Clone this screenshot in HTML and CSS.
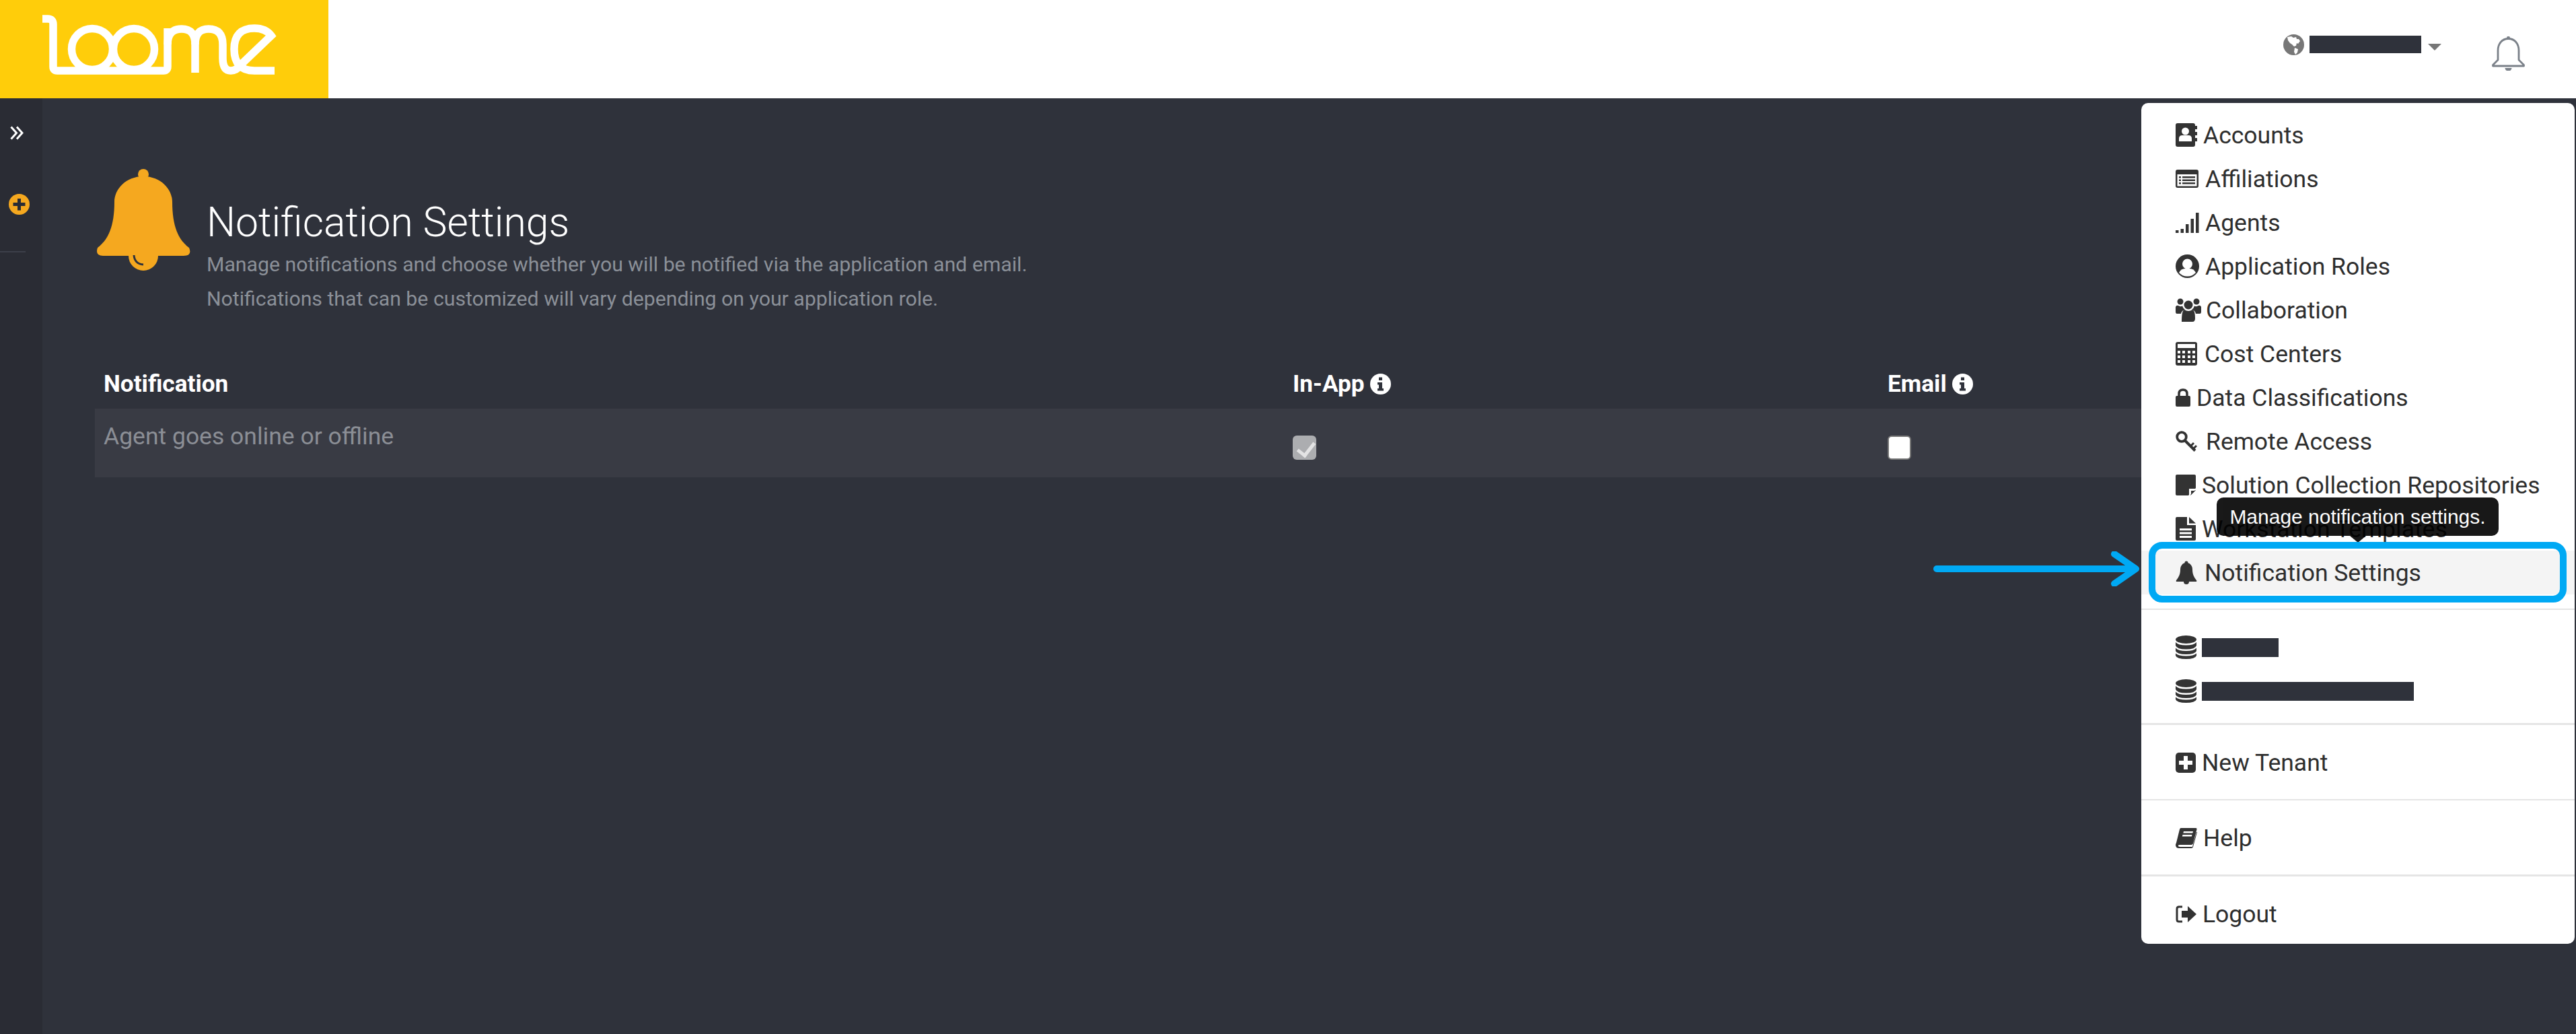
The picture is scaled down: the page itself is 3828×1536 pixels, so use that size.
FILE: index.html
```html
<!DOCTYPE html>
<html lang="en">
<head>
<meta charset="utf-8">
<title>Notification Settings</title>
<link rel="stylesheet" href="styles.css">
</head>
<body>
<header class="topbar">
  <a class="logo" aria-label="Loome">
    <svg width="488" height="146" viewBox="0 0 488 146" fill="none" stroke="#fff" stroke-width="11.5">
      <path d="M63 28H71Q79 28 79 36V99Q79 105 85 105H243Q249 105 249 99V42"/>
      <circle cx="137" cy="73" r="30.5"/>
      <circle cx="199" cy="73" r="30.5"/>
      <path d="M249 66Q249 43 270 43Q290 43 290 66V108"/>
      <path d="M290 66Q290 43 310 43Q331 43 331 66V86Q331 105 343 105Q352 105 359 95L403 53Q395 42 378 42Q348 42 348 73Q348 105 378 105H408"/>
    </svg>
  </a>
  <div class="top-right">
    <svg class="globe" width="31" height="31" viewBox="0 0 31 31">
      <circle cx="15.5" cy="15.5" r="15.5" fill="#777"/>
      <path d="M6 4L12 3L15 5L19 4L20 7L23 7L25 10L22 14L20 13L19 17L16 18L13 15L10 13L7 9Z" fill="#fff"/>
      <path d="M17 20L22 22L21 27L18 30L16 26Z" fill="#fff"/>
    </svg>
    <span class="redact user-bar"></span>
    <span class="caret"></span>
    <svg class="top-bell" width="49" height="52" viewBox="0 0 49 52" fill="none" stroke="#7b8189" stroke-width="2.8">
      <path d="M24.5 4.500C15 4.500 9 12 9 22V36L1.500 43.500V45H47.500V43.500L40 36V22C40 12 34 4.500 24.500 4.500Z" stroke-linejoin="round"/>
      <rect x="22" y="1" width="5" height="4" rx="2" fill="#7b8189" stroke="none"/>
      <path d="M19.500 48H29.500A5 4.500 0 0 1 19.500 48Z" fill="#7b8189" stroke="none"/>
    </svg>
  </div>
</header>

<div class="shell">
  <aside class="sidebar">
    <svg class="side-chevrons" width="20" height="21" viewBox="0 0 20 21" fill="none" stroke="#fff" stroke-width="3">
      <path d="M1.500 1.500L9.500 10.500L1.500 19.500"/>
      <path d="M10 1.500L18 10.500L10 19.500"/>
    </svg>
    <svg class="side-plus" width="31" height="31" viewBox="0 0 31 31">
      <circle cx="15.500" cy="15.500" r="15.500" fill="#f5a81f"/>
      <path d="M13 7H18V13H24.500V18H18V24.500H13V18H6.500V13H13Z" fill="#2a2c34"/>
    </svg>
    <div class="side-rule"></div>
  </aside>

  <main class="content">
    <section class="page-head">
      <svg class="page-bell" width="141" height="151" viewBox="0 0 141 151">
        <circle cx="70" cy="8" r="8" fill="#f5a81f"/>
        <path d="M70 11C44 11 27 30 27 49C27 85 18 105 2 117Q-2 129 10 129H130Q143 129 138 117C122 105 113 85 113 49C113 30 96 11 70 11Z" fill="#f5a81f"/>
        <path d="M48 129A22 22 0 0 0 92 129Z" fill="#f5a81f"/>
        <path d="M56 128Q57 141 70 142" fill="none" stroke="#2f323b" stroke-width="3"/>
      </svg>
      <div class="page-titles">
        <h1>Notification Settings</h1>
        <p>Manage notifications and choose whether you will be notified via the application and email.</p>
        <p>Notifications that can be customized will vary depending on your application role.</p>
      </div>
    </section>

    <section class="settings">
      <div class="settings-head">
        <div>Notification</div>
        <div class="with-info">In-App
          <svg width="31" height="31" viewBox="0 0 31 31"><circle cx="15.500" cy="15.500" r="15.500" fill="#fff"/><path d="M13 5.500H18V10H13ZM11 13H18V22H20V25.500H11V22H13V16.500H11Z" fill="#2f323b"/></svg>
        </div>
        <div class="with-info">Email
          <svg width="31" height="31" viewBox="0 0 31 31"><circle cx="15.500" cy="15.500" r="15.500" fill="#fff"/><path d="M13 5.500H18V10H13ZM11 13H18V22H20V25.500H11V22H13V16.500H11Z" fill="#2f323b"/></svg>
        </div>
      </div>
      <div class="settings-row">
        <div class="row-label">Agent goes online or offline</div>
        <div class="row-check"><input class="check" type="checkbox" checked disabled></div>
        <div class="row-check"><input class="check" type="checkbox"></div>
      </div>
    </section>
  </main>
</div>

<nav class="menu">
  <a class="item"><svg width="32" height="35" viewBox="0 0 32 35"><rect width="29" height="35" rx="3" fill="#333"/><path d="M29 4h3v5h-3zM29 13h3v5h-3zM29 22h3v5h-3z" fill="#333"/><circle cx="14.500" cy="12" r="5.500" fill="#fff"/><path d="M5 27V23Q5 18 10 18H19Q24 18 24 23V27Z" fill="#fff"/></svg>Accounts</a>
  <a class="item"><svg width="35" height="27" viewBox="0 0 35 27"><rect width="34" height="27" rx="3" fill="#333"/><rect x="2.500" y="7" width="29" height="17.500" fill="#fff"/><path d="M5 10h3v2.500H5zM5 14.500h3V17H5zM5 19h3v2.500H5zM10 10h19v2.500H10zM10 14.500h19V17H10zM10 19h19v2.500H10z" fill="#333"/></svg>Affiliations</a>
  <a class="item"><svg width="35" height="30" viewBox="0 0 35 30" fill="#333"><rect x="0" y="26" width="4.500" height="4"/><rect x="7.500" y="24" width="4.500" height="6"/><rect x="15" y="17" width="4.500" height="13"/><rect x="22.500" y="9" width="4.500" height="21"/><rect x="30" y="0" width="4.500" height="30"/></svg>Agents</a>
  <a class="item"><svg width="35" height="35" viewBox="0 0 35 35"><circle cx="17.500" cy="17.500" r="17.500" fill="#333"/><circle cx="17.500" cy="14" r="7.500" fill="#fff"/><path d="M5 27Q8 21 14 21H21Q27 21 30 27Q25 32.500 17.500 32.500Q10 32.500 5 27Z" fill="#fff"/></svg>Application Roles</a>
  <a class="item"><svg class="ic-team" width="38" height="35" viewBox="0 0 38 35" fill="#333"><circle cx="7" cy="5" r="4.500"/><circle cx="31" cy="5" r="4.500"/><circle cx="19" cy="10" r="6.500"/><path d="M0 13Q1 10 4 11Q7 13 10 11.500Q11 15 14 17Q9 18 8 23H2Q0 23 0 20ZM38 13Q37 10 34 11Q31 13 28 11.500Q27 15 24 17Q29 18 30 23H36Q38 23 38 20Z"/><path d="M9 35Q9 18 13 17Q19 21 25 17Q29 18 29 30Q29 35 25 35H12Z"/></svg>Collaboration</a>
  <a class="item"><svg class="ic-calc" width="32" height="35" viewBox="0 0 32 35"><rect width="32" height="35" rx="3" fill="#333"/><rect x="3" y="3" width="26" height="6" fill="#fff"/><path d="M3 13h4v4H3zM10 13h4v4h-4zM18 13h4v4h-4zM25 13h4v4h-4zM3 20h4v4H3zM10 20h4v4h-4zM18 20h4v4h-4zM25 20h4v4h-4zM3 27h4v4H3zM10 27h4v4h-4zM18 27h4v4h-4zM25 27h4v4h-4z" fill="#fff"/></svg>Cost Centers</a>
  <a class="item"><svg width="22" height="27" viewBox="0 0 22 27" fill="none"><rect y="11" width="22" height="16" rx="2" fill="#333"/><path d="M5 12V8Q5 2 11 2Q17 2 17 8V12" stroke="#333" stroke-width="3.500"/></svg>Data Classifications</a>
  <a class="item"><svg class="ic-key" width="32" height="31" viewBox="0 0 32 31" fill="none" stroke="#333"><circle cx="9" cy="9" r="6.800" stroke-width="3.800"/><path d="M13.500 14L29 29.500" stroke-width="4"/><path d="M23 22L27 18M27 26L31 22" stroke-width="3"/></svg>Remote Access</a>
  <a class="item"><svg width="30" height="31" viewBox="0 0 30 31"><path d="M2 0H28Q30 0 30 2V20L19 31H2Q0 31 0 29V2Q0 0 2 0Z" fill="#333"/><path d="M22 23H30L22 31Z" fill="#333"/><path d="M20 21H30V22L21 31H20Z" fill="#fff"/><path d="M23 24H29L23 30Z" fill="#333"/></svg>Solution Collection Repositories</a>
  <a class="item"><svg width="30" height="35" viewBox="0 0 30 35"><path d="M2 0H17V12H30V33Q30 35 28 35H2Q0 35 0 33V2Q0 0 2 0Z" fill="#333"/><path d="M20 0L30 9.500H20Z" fill="#333"/><path d="M6 17H24V20H6ZM6 22.500H24V25.500H6ZM6 28H24V31H6Z" fill="#fff"/></svg>Workstation Templates</a>
  <a class="item item-active"><svg class="ic-bell" width="32" height="35" viewBox="0 0 32 35"><circle cx="16" cy="3" r="2.500" fill="#333"/><path d="M16 3C10 3 7 8 7 13C7 21 4 25 1 29Q0 31 2 31H30Q32 31 31 29C28 25 25 21 25 13C25 8 22 3 16 3Z" fill="#333"/><path d="M12 31A4 4 0 0 0 20 31Z" fill="#333"/></svg>Notification Settings</a>
  <hr class="rule">
  <a class="item"><svg class="ic-db" width="31" height="35" viewBox="0 0 31 35" fill="#333"><ellipse cx="15.500" cy="6" rx="15.500" ry="6"/><path d="M0 10Q4 14.500 15.500 14.500Q27 14.500 31 10V15Q29 20.500 15.500 20.500Q2 20.500 0 15ZM0 18.500Q4 23 15.500 23Q27 23 31 18.500V23Q29 28 15.500 28Q2 28 0 23ZM0 26.500Q4 30.500 15.500 30.500Q27 30.500 31 26.500V30Q29 35 15.500 35Q2 35 0 30Z"/></svg><span class="redact name-short"></span></a>
  <a class="item"><svg class="ic-db" width="31" height="35" viewBox="0 0 31 35" fill="#333"><ellipse cx="15.500" cy="6" rx="15.500" ry="6"/><path d="M0 10Q4 14.500 15.500 14.500Q27 14.500 31 10V15Q29 20.500 15.500 20.500Q2 20.500 0 15ZM0 18.500Q4 23 15.500 23Q27 23 31 18.500V23Q29 28 15.500 28Q2 28 0 23ZM0 26.500Q4 30.500 15.500 30.500Q27 30.500 31 26.500V30Q29 35 15.500 35Q2 35 0 30Z"/></svg><span class="redact name-long"></span></a>
  <hr class="rule rule-thick rule-tight">
  <a class="item"><svg width="30" height="30" viewBox="0 0 30 30"><rect width="30" height="30" rx="5" fill="#333"/><path d="M12 5H18V12H25V18H18V25H12V18H5V12H12Z" fill="#fff"/></svg>New Tenant</a>
  <hr class="rule">
  <a class="item"><svg width="32" height="30" viewBox="0 0 32 30" fill="#333"><path d="M8 0H30Q32 0 31.500 2L26 23Q25.500 25 23 25H6Q3.500 25 4 27Q4.500 28 7 28H25L31 6H32L26 28Q25.500 30 23 30H5Q0 30 0 25Q0 24 1 22L6 2Q6.500 0 8 0Z"/><path d="M12 5H26L25.300 7.500H11.300ZM10.500 10H24.500L23.800 12.500H9.800Z" fill="#fff"/></svg>Help</a>
  <hr class="rule rule-thick">
  <a class="item"><svg width="31" height="26" viewBox="0 0 31 26" fill="#333"><path d="M10 2H5Q2 2 2 5V21Q2 24 5 24H10" fill="none" stroke="#333" stroke-width="3"/><path d="M9 8H18V1L31 13L18 25V18H9Z"/></svg>Logout</a>

  <div class="tooltip">Manage notification settings.</div>
</nav>

<div class="callout-box"></div>
<svg class="callout-arrow" width="315" height="52" viewBox="0 0 315 52" fill="none" stroke="#00a9f4" stroke-width="10" stroke-linecap="round" stroke-linejoin="round">
  <path d="M10 26H304"/>
  <path d="M274 4L306 26L274 48"/>
</svg>
</body>
</html>
```

FILE: styles.css
```css
* { box-sizing: border-box; }

html, body {
  margin: 0;
  height: 100%;
}

body {
  position: relative;
  display: flex;
  flex-direction: column;
  height: 1536px;
  overflow: hidden;
  background: #2f323b;
  font-family: Roboto, "Liberation Sans", sans-serif;
  color: #fff;
}

/* top bar */
.topbar {
  display: flex;
  justify-content: space-between;
  align-items: stretch;
  height: 146px;
  background: #fff;
  flex: none;
}

.logo {
  display: block;
  width: 488px;
  height: 146px;
  background: #ffcd0a;
}

.logo svg { display: block; }

.top-right {
  display: flex;
  align-items: flex-start;
  padding: 51px 76px 0 0;
}

.globe { flex: none; }

.redact {
  display: block;
  background: #2f323b;
}

.user-bar {
  width: 166px;
  height: 26px;
  margin: 2px 0 0 8px;
}

.caret {
  width: 0;
  height: 0;
  margin: 14px 0 0 10px;
  border-left: 10px solid transparent;
  border-right: 10px solid transparent;
  border-top: 10px solid #777;
}

.top-bell { margin: 2px 0 0 75px; }

/* shell */
.shell {
  display: flex;
  flex: 1;
  min-height: 0;
}

.sidebar {
  width: 63px;
  flex: none;
  background: #2a2c34;
  display: flex;
  flex-direction: column;
  align-items: flex-start;
}

.side-chevrons { margin: 41px 0 0 15px; }
.side-plus { margin: 80px 0 0 13px; }

.side-rule {
  width: 38px;
  height: 2px;
  margin-top: 54px;
  background: #3c3f49;
}

.content {
  flex: 1;
  padding: 105px 78px 0;
}

.page-head {
  display: flex;
  align-items: flex-start;
}

.page-bell {
  flex: none;
  margin-left: 2px;
}

.page-titles { margin: 44px 0 0 23px; }

.page-titles h1 {
  margin: 0;
  font-size: 60.600px;
  font-weight: 300;
  line-height: 72px;
  color: #fff;
}

.page-titles p {
  margin: 0;
  font-size: 30.250px;
  line-height: 51px;
  color: #8b9098;
}

.settings { margin-top: 76px; }

.settings-head,
.settings-row {
  display: grid;
  grid-template-columns: 1754px 884px 1fr;
  padding-left: 13px;
}

.settings-head > div + div,
.settings-row > div + div { padding-left: 13px; }

.settings-head {
  align-items: center;
  height: 50px;
  font-size: 35.200px;
  font-weight: 700;
  line-height: 50px;
  margin-bottom: 12px;
}

.with-info {
  display: flex;
  align-items: center;
  gap: 8px;
}

.settings-row {
  height: 102px;
  background: #393b44;
}

.row-label {
  padding-top: 18px;
  font-size: 35.500px;
  line-height: 46px;
  color: #8b8e95;
}

.row-check {
  display: flex;
  align-items: center;
}

.check {
  appearance: none;
  position: relative;
  width: 35px;
  height: 36px;
  margin: 14px 0 0;
  border: 2px solid #767676;
  border-radius: 6px;
  background: #fff;
}

.check:checked {
  border: 0;
  background: #acadb0;
}

.check:checked::after {
  content: "";
  position: absolute;
  left: 12px;
  top: 5px;
  width: 11px;
  height: 21px;
  border-right: 5px solid #e3e3e4;
  border-bottom: 5px solid #e3e3e4;
  transform: rotate(38deg);
}

/* dropdown */
.menu {
  position: absolute;
  top: 153px;
  left: 3182px;
  width: 644px;
  height: 1249px;
  padding-top: 15px;
  background: #fff;
  border-radius: 10px;
  color: #2e2e2e;
}

.item {
  display: flex;
  align-items: center;
  gap: 9px;
  height: 65px;
  padding-left: 51px;
  font-size: 35.500px;
  white-space: nowrap;
}

.item svg { flex: none; }

.item-active {
  margin-bottom: -1px;
  background: #f4f4f4;
}

.ic-key { margin-right: 4px; }
.ic-bell { margin-right: 2px; }
.ic-team { margin-right: -2px; }
.ic-calc { margin-right: 2px; }

.rule {
  margin: 22px 0 23px;
  border: 0;
  border-top: 2px solid #e5e5e5;
}

.rule-thick { border-top-width: 3px; }
.rule-tight { margin-top: 15px; }

.name-short { width: 114px; height: 28px; }
.name-long { width: 315px; height: 28px; }

.ic-db { margin-right: -1px; }

.tooltip {
  position: absolute;
  left: 112px;
  top: 586px;
  width: 419px;
  height: 57px;
  border-radius: 10px;
  background: #000;
  opacity: .9;
  color: #fff;
  font-family: "Liberation Sans", Arial, sans-serif;
  font-size: 30px;
  line-height: 57px;
  text-align: center;
  white-space: nowrap;
}

.tooltip::after {
  content: "";
  position: absolute;
  left: 50%;
  bottom: -10px;
  margin-left: -12px;
  border-left: 12px solid transparent;
  border-right: 12px solid transparent;
  border-top: 10px solid #000;
}

/* annotation */
.callout-box {
  position: absolute;
  left: 3193px;
  top: 805px;
  width: 621px;
  height: 90px;
  border: 10px solid #00a9f4;
  border-radius: 20px;
}

.callout-arrow {
  position: absolute;
  left: 2868px;
  top: 819px;
}
```
